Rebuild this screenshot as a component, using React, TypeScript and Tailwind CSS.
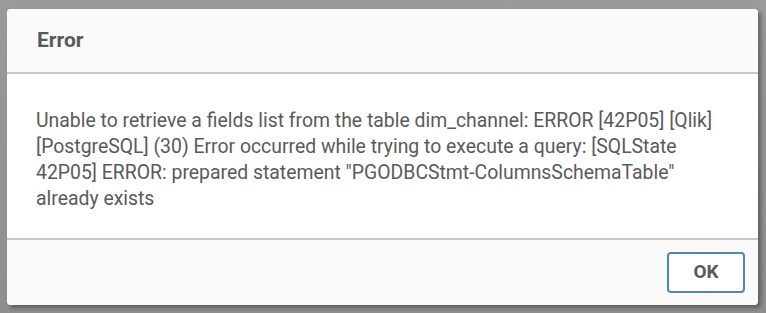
export default function App() {
  return (
    <div
      className="h-[313px] w-[766px] bg-gradient-to-b from-[#9a9a9a] to-[#8e8e8e] pl-[7px] pt-[9px]"
      style={{ fontFamily: "Roboto, 'Noto Sans', sans-serif" }}
    >
      <div className="flex h-[296px] w-[751px] flex-col overflow-hidden rounded-[4px] bg-white shadow-[3px_3px_4px_rgba(0,0,0,0.35)]">
        <div className="flex h-[65px] items-center border-b-2 border-[#c8c8c8] bg-[#fafafa] px-[30px]">
          <h1 className="text-[21px] font-bold text-[#595959]">Error</h1>
        </div>
        <div className="h-[166px] border-b-2 border-[#c8c8c8] bg-white px-[29px] pt-[34px]">
          <p className="text-[19.4px] leading-[26px] text-[#5a5a5a]">
            Unable to retrieve a fields list from the table dim_channel: ERROR [42P05] [Qlik]
            <br />
            [PostgreSQL] (30) Error occurred while trying to execute a query: [SQLState
            <br />
            42P05] ERROR: prepared statement "PGODBCStmt-ColumnsSchemaTable"
            <br />
            already exists
          </p>
        </div>
        <div className="flex flex-1 items-center justify-end bg-[#fafafa] pr-[13px]">
          <button className="h-[41px] w-[78px] rounded-[4px] border-2 border-[#4e88b3] bg-white text-[19px] font-bold text-[#595959]">
            OK
          </button>
        </div>
      </div>
    </div>
  );
}
